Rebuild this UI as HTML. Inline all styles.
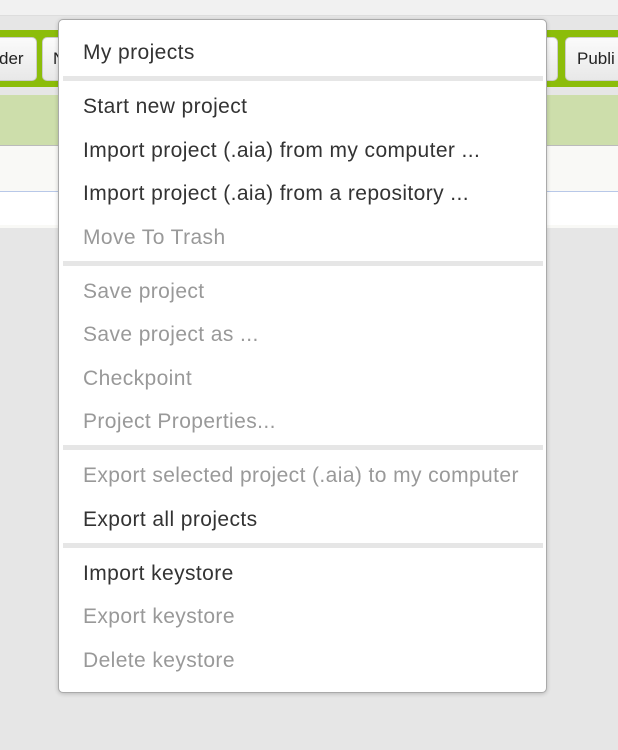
<!DOCTYPE html>
<html><head><style>
body{margin:0;width:618px;height:750px;overflow:hidden;background:#e6e6e6;font-family:"Liberation Sans",sans-serif;position:relative}
.top{position:absolute;left:0;top:0;width:618px;height:15px;background:#f1f1f1;border-bottom:1px solid #ddd}
.green{position:absolute;left:0;top:30px;width:618px;height:57px;background:#8cbd0a}
.btn{position:absolute;top:37px;height:42px;background:linear-gradient(#fbfbfb,#e8e8e8);border:1px solid #ccc;border-radius:5px;font-size:17px;line-height:42px;color:#222;overflow:hidden}
.lg{position:absolute;left:0;top:95px;width:618px;height:50px;background:#cddeab;border-bottom:1px solid #bbb}
.wh{position:absolute;left:0;top:146px;width:618px;height:82px;background:#f9f9f6}
.wh2{position:absolute;left:0;top:191px;width:618px;height:33px;background:#fff;border-top:1px solid #b8c8e8}
.menu{position:absolute;left:58px;top:19px;width:487px;height:672px;background:#fff;border:1px solid #aaa;border-radius:5px;box-shadow:0 1px 4px rgba(0,0,0,.2)}
.it{position:absolute;left:24px;font-size:21px;color:#333;line-height:24px;letter-spacing:0.4px;white-space:nowrap}
.d{color:#999}
.sep{position:absolute;left:4px;width:480px;height:5px;background:#e6e6e6}
</style></head><body>
<div class="top"></div>
<div class="green"></div>
<div class="btn" style="left:-10px;width:45px;text-indent:8px">der</div>
<div class="btn" style="left:42px;width:30px;text-indent:10px">N</div>
<div class="btn" style="left:520px;width:36px"></div>
<div class="btn" style="left:565px;width:70px;text-indent:11px">Publi</div>
<div class="lg"></div>
<div class="wh"></div>
<div class="wh2"></div>
<div class="menu">
<div class="it" style="top:21px">My projects</div>
<div class="sep" style="top:56px"></div>
<div class="it" style="top:75px">Start new project</div>
<div class="it" style="top:119px">Import project (.aia) from my computer ...</div>
<div class="it" style="top:162px">Import project (.aia) from a repository ...</div>
<div class="it d" style="top:206px">Move To Trash</div>
<div class="sep" style="top:241px"></div>
<div class="it d" style="top:260px">Save project</div>
<div class="it d" style="top:303px">Save project as ...</div>
<div class="it d" style="top:347px">Checkpoint</div>
<div class="it d" style="top:390px">Project Properties...</div>
<div class="sep" style="top:425px"></div>
<div class="it d" style="top:444px">Export selected project (.aia) to my computer</div>
<div class="it" style="top:488px">Export all projects</div>
<div class="sep" style="top:523px"></div>
<div class="it" style="top:542px">Import keystore</div>
<div class="it d" style="top:585px">Export keystore</div>
<div class="it d" style="top:629px">Delete keystore</div>
</div>
</body></html>
